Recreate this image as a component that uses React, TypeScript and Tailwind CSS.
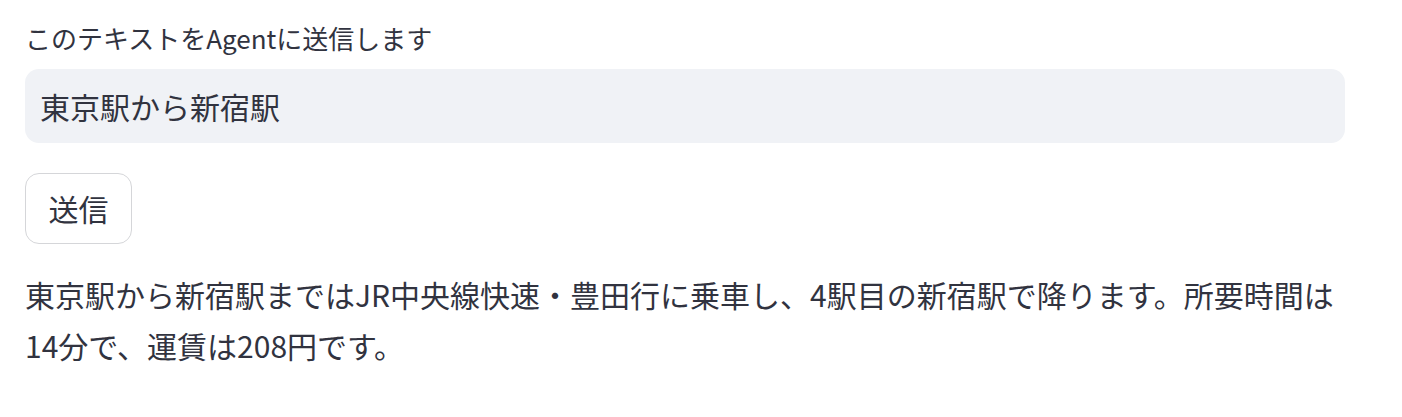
import React from "react";

export default function App() {
  return (
    <div
      className="w-[1402px] h-[417px] bg-white text-[#31333f] overflow-hidden"
      style={{ fontFamily: '"Noto Sans CJK JP", "Noto Sans", sans-serif' }}
    >
      <div className="pl-[25px] pt-[19px] w-[1345px] flex flex-col">
        <div className="text-[26px] leading-[38px] h-[38px]">このテキストをAgentに送信します</div>
        <div className="mt-[12px] h-[74px] w-[1320px] rounded-[14px] bg-[#f0f2f6] flex items-center pl-[15px] text-[30px]">
          東京駅から新宿駅
        </div>
        <div className="mt-[30px]">
          <button className="h-[71px] w-[107px] rounded-[14px] border border-[#d5d6d9] bg-white flex items-center justify-center text-[30px] text-[#31333f]">
            送信
          </button>
        </div>
        <p className="mt-[25px] text-[30px] leading-[51px] w-[1320px]">
          東京駅から新宿駅まではJR中央線快速・豊田行に乗車し、4駅目の新宿駅で降ります。所要時間は14分で、運賃は208円です。
        </p>
      </div>
    </div>
  );
}
